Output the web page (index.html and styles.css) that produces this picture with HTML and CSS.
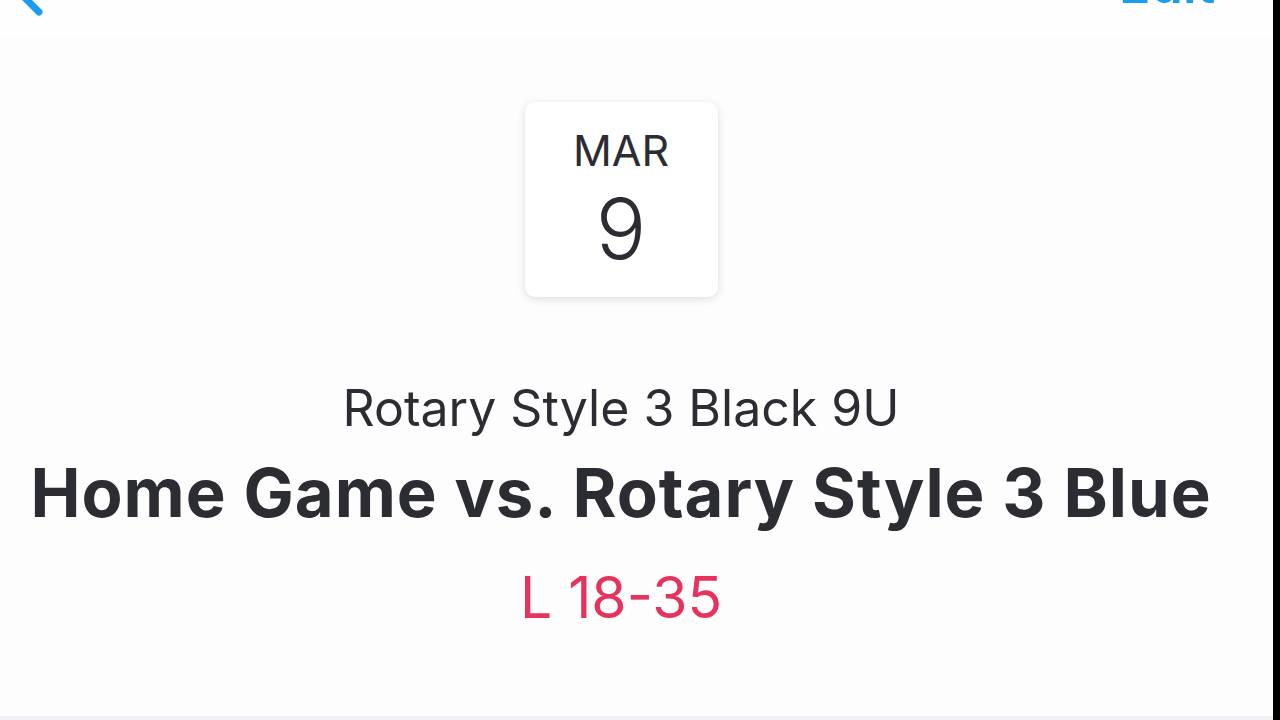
FILE: index.html
```html
<!DOCTYPE html>
<html lang="en">
<head>
  <meta charset="UTF-8" />
  <meta name="viewport" content="width=device-width, initial-scale=1.0"/>
  <title>Game Detail</title>
  <link rel="stylesheet" href="styles.css">
</head>
<body>
  <div class="screen">
    <!-- top nav, scrolled partly out of view -->
    <div class="navbar">
      <a class="back" href="#">
        <svg width="40" height="60" viewBox="0 0 40 60">
          <path d="M34 6 L10 30 L34 54" fill="none" stroke="#1a9cf0" stroke-width="7" stroke-linecap="round" stroke-linejoin="round"/>
        </svg>
      </a>
      <a class="edit" href="#">Edit</a>
    </div>

    <!-- game summary -->
    <main class="game">
      <div class="date-card">
        <div class="month">MAR</div>
        <div class="day">9</div>
      </div>
      <div class="team">Rotary Style 3 Black 9U</div>
      <h1 class="matchup">Home Game vs. Rotary Style 3 Blue</h1>
      <div class="result loss">L 18-35</div>
    </main>
  </div>
  <div class="edge"></div>
</body>
</html>
```

FILE: styles.css
```css
html, body {
  margin: 0; padding: 0;
  height: 100%;
}
body {
  font-family: Inter, "Noto Sans", Arial, sans-serif;
  background: #000;
  display: flex;
  overflow: hidden;
}

/* 主畫面 */
.screen {
  width: 1273px;
  height: 100%;
  background: #fdfdfd;
  border-bottom: 4px solid #f0f0f6;
  box-sizing: border-box;
  display: flex;
  flex-direction: column;
}
.edge {
  flex: 1;
  background: #000;
}

/* 導覽列 (上半部已捲出畫面) */
.navbar {
  height: 36px;
  background: #fefefe;
  display: flex;
  justify-content: space-between;
  align-items: flex-end;
  padding: 0 58px 0 5px;
  overflow: hidden;
}
.back {
  display: block;
  margin-bottom: 18px;
  line-height: 0;
}
.edit {
  color: #1a9cf0;
  text-decoration: none;
  font-size: 52px;
  font-weight: 600;
  line-height: 1;
  margin-bottom: 25px;
}

/* 比賽資訊 */
.game {
  width: 1242px;
  display: flex;
  flex-direction: column;
  align-items: center;
  text-align: center;
  color: #2c2c33;
}
.date-card {
  margin-top: 66px;
  width: 193px;
  height: 195px;
  box-sizing: border-box;
  background: #fff;
  border-radius: 10px;
  box-shadow: 0 2px 8px rgba(0, 0, 0, 0.13);
  display: flex;
  flex-direction: column;
  align-items: center;
  padding-top: 22px;
}
.month {
  font-size: 43px;
  line-height: 52px;
  font-weight: 400;
}
.day {
  font-size: 84px;
  line-height: 90px;
  font-weight: 300;
  margin-top: 8px;
}
.team {
  margin-top: 81px;
  font-size: 50px;
  line-height: 60px;
  font-weight: 400;
}
.matchup {
  margin: 15px 0 0;
  font-size: 67px;
  line-height: 80px;
  font-weight: 700;
  letter-spacing: 1px;
}
.result {
  margin-top: 32px;
  font-size: 57px;
  line-height: 66px;
  font-weight: 400;
}
.result.loss {
  color: #e6335e;
}
```
